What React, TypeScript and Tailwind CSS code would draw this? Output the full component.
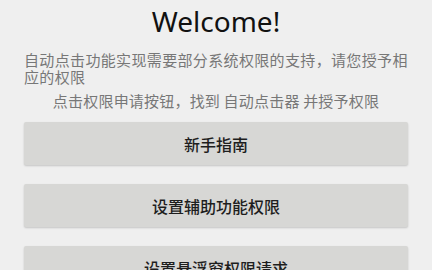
import React from "react";

const cjk = { fontFamily: '"Noto Sans CJK SC", "Noto Sans", sans-serif' };

export default function App() {
  const buttons = ["新手指南", "设置辅助功能权限", "设置悬浮窗权限请求"];
  return (
    <div className="w-[432px] h-[270px] overflow-hidden bg-[#efefef] px-[24px] flex flex-col" style={cjk}>
      <h1
        className="mt-[7px] text-center text-[28px] leading-[28px] text-[#111111]"
        style={{ fontFamily: '"Noto Sans", sans-serif' }}
      >
        Welcome!
      </h1>
      <p className="mt-[16px] -mr-[4px] text-[15px] leading-[17px] tracking-[0.35px] text-[#777777]">
        自动点击功能实现需要部分系统权限的支持，请您授予相应的权限
      </p>
      <p className="mt-[7px] text-center text-[15px] leading-[17px] tracking-[0.2px] text-[#777777] whitespace-pre">
        点击权限申请按钮，找到 自动点击器 并授予权限
      </p>
      <div className="mt-[13px] flex flex-col gap-[19px]">
        {buttons.map((b) => (
          <div
            key={b}
            className="h-[43px] shrink-0 flex items-center justify-center bg-[#d7d7d5] rounded-[2px] shadow-[0_1px_2px_rgba(0,0,0,0.18)] text-[16px] font-medium text-[#1e1e1e]"
          >
            {b}
          </div>
        ))}
      </div>
    </div>
  );
}
